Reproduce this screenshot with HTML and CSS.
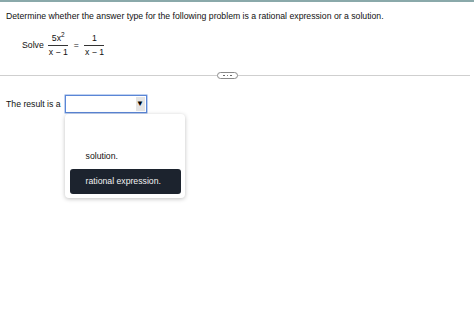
FILE: index.html
```html
<!DOCTYPE html>
<html>
<head>
<meta charset="utf-8">
<link rel="stylesheet" href="styles.css">
</head>
<body>
<div class="topbar"></div>
<div class="content">
  <p class="prompt">Determine whether the answer type for the following problem is a rational expression or a solution.</p>
  <div class="equation">
    <span class="solve">Solve</span>
    <span class="frac"><span class="num">5x<sup>2</sup></span><span class="den">x − 1</span></span>
    <span class="eq">=</span>
    <span class="frac"><span class="num">1</span><span class="den">x − 1</span></span>
  </div>
</div>
<div class="divider">
  <span class="rule short"></span>
  <span class="pill"><span></span><span></span><span></span></span>
  <span class="rule long"></span>
</div>
<div class="answer">
  <span class="label">The result is a</span>
  <div class="selectwrap">
    <div class="select"><span class="arrow">▼</span></div>
    <div class="menu">
      <div class="opt blank"></div>
      <div class="opt">solution.</div>
      <div class="opt active">rational expression.</div>
    </div>
  </div>
</div>
</body>
</html>
```
FILE: styles.css
```css
html, body { margin: 0; padding: 0; background: #fff; }
body { font-family: "Liberation Sans", Arial, sans-serif; color: #111; font-size: 8.7px; width: 474px; height: 313px; overflow: hidden; }
.topbar { height: 2px; background: #8aa9aa; }
.content { padding: 9px 0 0 6px; }
.prompt { margin: 0; line-height: 11px; }
.equation { display: flex; align-items: center; margin: 11px 0 0 16px; gap: 3px; }
.solve { margin-right: 0; }
.frac { display: inline-flex; flex-direction: column; align-items: center; }
.num { padding: 0 2px 1px; line-height: 11px; border-bottom: 1px solid #333; min-width: 16px; text-align: center; }
.num sup { font-size: 6.5px; vertical-align: 4px; line-height: 0; }
.den { padding: 1px 2px 0; line-height: 10px; }
.eq { margin: 0 1px; }
.divider { display: flex; align-items: center; margin-top: 15px; }
.rule { height: 1px; border-top: 1px solid #cfcfcf; }
.rule.short { width: 217px; }
.rule.long { width: 232px; }
.pill { display: flex; gap: 2px; justify-content: center; align-items: center; width: 19px; height: 5px; border: 1px solid #8a8a8a; border-radius: 4px; }
.pill span { width: 1.5px; height: 1.5px; background: #555; border-radius: 50%; }
.answer { display: flex; align-items: flex-start; margin: 16px 0 0 6px; }
.label { margin-top: 4px; margin-right: 4px; }
.selectwrap { position: relative; }
.select { width: 79px; height: 16px; border: 1px solid #5a86d6; box-shadow: 0 0 0 0.5px #7ea2e0; display: flex; justify-content: flex-end; align-items: center; padding-right: 1px; }
.arrow { width: 9px; height: 14px; background: #e4e4e4; font-size: 8px; line-height: 14px; text-align: center; color: #000; }
.menu { position: absolute; left: 0; top: 19px; width: 111px; padding: 4px 4px 4px 5px; background: #fff; border-radius: 4px; box-shadow: 0 1px 4px rgba(0,0,0,0.25); }
.opt { height: 25px; line-height: 25px; padding-left: 16px; }
.opt.blank { height: 24px; }
.opt.blank + .opt { margin-top: 2px; }
.opt.active { background: #1c232e; color: #f2f2f2; border-radius: 3px; }
```
